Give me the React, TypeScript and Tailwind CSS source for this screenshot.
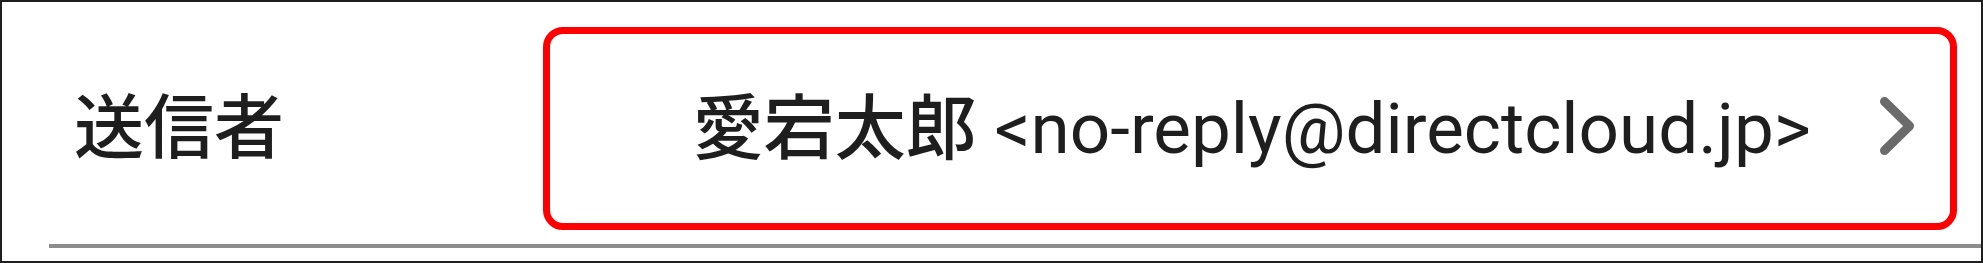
import React from 'react';

const fontStack = 'font-["Roboto","Noto_Sans_CJK_JP",sans-serif]';

const ChevronRight = () => (
  <svg width="34" height="58" viewBox="0 0 34 58" className="shrink-0">
    <polyline
      points="4.5,4.5 29.5,29 4.5,53.5"
      fill="none"
      stroke="#6b6b6b"
      strokeWidth="9"
      strokeLinecap="round"
      strokeLinejoin="round"
    />
  </svg>
);

export default function App() {
  return (
    <div className={`w-[1983px] h-[263px] bg-white border-2 border-[#1f1f1f] ${fontStack}`}>
      <div className="flex items-center pt-[25px]">
        <div className="w-[541px] shrink-0 pl-[72px] text-[70px] leading-none font-medium text-[#1e1e1e]">
          送信者
        </div>
        <div className="w-[1414px] h-[203px] shrink-0 flex items-center justify-end border-[7px] border-[#ff0000] rounded-[20px] pr-[36px]">
          <span className="text-[71px] leading-none text-[#1e1e1e] whitespace-nowrap">
            <span className="font-medium">愛宕太郎</span> &lt;no-reply@directcloud.jp&gt;
          </span>
          <div className="ml-[69px] -mt-[6px]">
            <ChevronRight />
          </div>
        </div>
      </div>
      <div className="ml-[47px] mt-[14px] h-[4px] bg-[#8c8c8c]" />
    </div>
  );
}
